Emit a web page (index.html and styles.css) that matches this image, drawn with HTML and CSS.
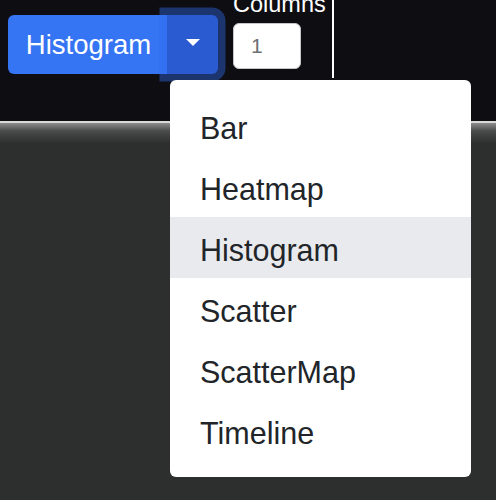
FILE: index.html
```html
<!DOCTYPE html>
<html>
<head>
<meta charset="utf-8">
<link rel="stylesheet" href="styles.css">
</head>
<body>
<div class="page">
  <header class="toolbar">
    <div class="btn-group">
      <button class="btn-main">Histogram</button>
      <button class="btn-toggle"><span class="caret"></span></button>
    </div>
    <div class="columns">
      <label class="columns-label">Columns</label>
      <input class="columns-input" type="text" placeholder="1">
    </div>
    <div class="vsep"></div>
  </header>
  <div class="hline"></div>
  <main class="content"></main>
  <ul class="menu">
    <li class="item">Bar</li>
    <li class="item">Heatmap</li>
    <li class="item active">Histogram</li>
    <li class="item">Scatter</li>
    <li class="item">ScatterMap</li>
    <li class="item">Timeline</li>
  </ul>
</div>
</body>
</html>
```
FILE: styles.css
```css
* { box-sizing: border-box; }
html, body { margin: 0; padding: 0; }
body {
  font-family: "Liberation Sans", Arial, sans-serif;
  background: #2d2f2e;
  width: 496px;
  height: 500px;
  overflow: hidden;
}
.page { position: relative; height: 500px; display: flex; flex-direction: column; }
.toolbar {
  height: 121px;
  background: #0e0e12;
  display: flex;
  align-items: flex-start;
  padding-left: 8px;
  flex: none;
}
.btn-group {
  margin-top: 15px;
  display: flex;
  height: 59px;
}
.btn-main {
  width: 159px;
  height: 59px;
  border: none;
  border-radius: 6px 0 0 6px;
  background: #3574f3;
  color: #fff;
  font-family: "Liberation Sans", Arial, sans-serif;
  font-size: 27.5px;
  padding: 0 0 0 2px;
  text-align: center;
}
.btn-toggle {
  position: relative;
  z-index: 1;
  width: 51px;
  height: 59px;
  border: none;
  border-radius: 0 6px 6px 0;
  background: #2b5bd0;
  box-shadow: 0 0 0 7.5px rgba(49, 108, 240, 0.42);
  display: flex;
  align-items: center;
  justify-content: center;
  padding: 0;
}
.caret {
  width: 0;
  height: 0;
  border-left: 7.5px solid transparent;
  border-right: 7.5px solid transparent;
  border-top: 7.5px solid #fff;
  margin-top: -4px;
}
.columns {
  margin-left: 15px;
  display: flex;
  flex-direction: column;
  align-items: flex-start;
}
.columns-label {
  color: #fff;
  font-size: 23.5px;
  line-height: 23px;
  margin-top: -7px;
}
.columns-input {
  margin-top: 7px;
  width: 68px;
  height: 46px;
  border: 1px solid #c4c6c9;
  border-radius: 6px;
  background: #fff;
  font-family: "Liberation Sans", Arial, sans-serif;
  font-size: 21px;
  padding: 0 0 0 17px;
  outline: none;
}
.columns-input::placeholder { color: #6c6f73; }
.vsep {
  margin-left: 6px;
  width: 2px;
  height: 78px;
  background: #fff;
}
.hline {
  height: 2px;
  background: #d8d8d8;
  flex: none;
}
.content {
  flex: 1;
  background: linear-gradient(#8c8d8c 0, #4a4c4b 8px, #2d2f2e 20px);
}
.menu {
  position: absolute;
  left: 170px;
  top: 80px;
  width: 301px;
  height: 397px;
  margin: 0;
  padding: 15px 0;
  list-style: none;
  background: #fff;
  border-radius: 6px;
  z-index: 2;
}
.item {
  height: 61px;
  line-height: 58px;
  padding: 4px 30px 0;
  font-size: 30.5px;
  color: #212529;
}
.item.active { background: #e9eaed; }
```
